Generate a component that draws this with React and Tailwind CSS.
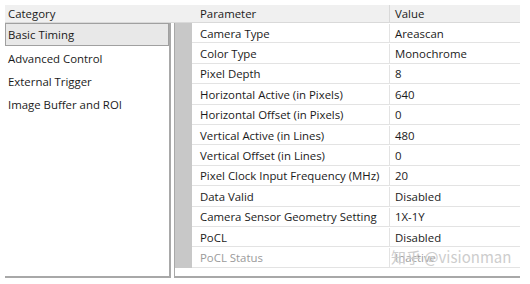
import React from 'react';

const rows = [
	['Camera Type', 'Areascan'],
	['Color Type', 'Monochrome'],
	['Pixel Depth', '8'],
	['Horizontal Active (in Pixels)', '640'],
	['Horizontal Offset (in Pixels)', '0'],
	['Vertical Active (in Lines)', '480'],
	['Vertical Offset (in Lines)', '0'],
	['Pixel Clock Input Frequency (MHz)', '20'],
	['Data Valid', 'Disabled'],
	['Camera Sensor Geometry Setting', '1X-1Y'],
	['PoCL', 'Disabled'],
	['PoCL Status', 'Inactive', true],
];

const categories = ['Advanced Control', 'External Trigger', 'Image Buffer and ROI'];

export default function App() {
	return (
		<div className="relative w-[530px] h-[284px] bg-white text-[11.4px] text-[#1a1a1a] font-['Open_Sans',sans-serif] overflow-hidden">
			{/* header */}
			<div className="ml-[5px] mt-[5px] w-[515px] h-[18px] bg-[#f0f0f0] border-b border-[#d9d9d9] flex items-center leading-none">
				<div className="w-[170px] pl-[3px]">Category</div>
				<div className="w-[23px]" />
				<div className="w-[191px] pl-[2px]">Parameter</div>
				<div className="h-full border-l border-[#d9d9d9] pl-[5px] flex items-center">Value</div>
			</div>

			<div className="ml-[5px] flex h-[255px]">
				{/* categories */}
				<div className="w-[166px] border-r-2 border-b-2 border-[#a8a8a8] flex flex-col">
					<div className="h-[23px] bg-[#e8e8e8] border border-[#a0a0a0] pl-[2px] flex items-center">Basic Timing</div>
					{categories.map((c) => (
						<div key={c} className="h-[23px] pl-[3px] pt-[2px] flex items-center">{c}</div>
					))}
				</div>

				{/* property grid */}
				<div className="ml-[3px] w-[346px] border-l border-b-2 border-[#a8a8a8] flex flex-col">
					<div className="flex">
						<div className="w-[17px] bg-[#c8c8c8]" />
						<div className="flex-1 flex flex-col">
							{rows.map(([p, v, dim]) => (
								<div key={p} className={`h-[20.4px] pt-[1px] flex items-center border-b border-[#e3e3e3] ${dim ? 'text-[#9a9a9a]' : ''}`}>
									<div className="w-[197px] pl-[8px] whitespace-nowrap">{p}</div>
									<div className="h-full flex-1 border-l border-[#e3e3e3] pl-[5px] flex items-center">{v}</div>
								</div>
							))}
						</div>
					</div>
				</div>
			</div>

			{/* watermark */}
			<div className="absolute left-[391px] top-[246px] text-[15px] text-[#cdcdcd] font-['Noto_Sans_CJK_SC',sans-serif] whitespace-nowrap">
				知乎 @visionman
			</div>
		</div>
	);
}
